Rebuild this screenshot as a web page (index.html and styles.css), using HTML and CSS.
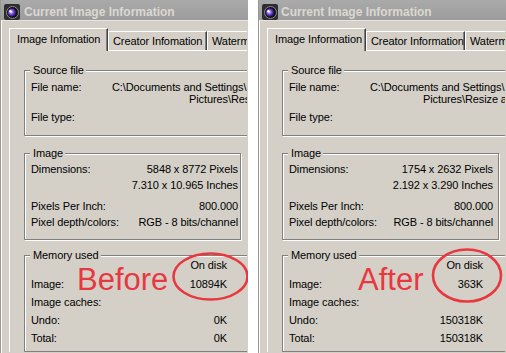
FILE: index.html
```html
<!DOCTYPE html>
<html lang="en">
<head>
<meta charset="utf-8">
<title>Current Image Information – Before / After</title>
<link rel="stylesheet" href="styles.css">
</head>
<body>
<div class="shot">
  <section class="win win-before">
    <header class="titlebar">
      <svg class="appicon" viewBox="0 0 16 16" width="16" height="16" aria-hidden="true">
        <defs>
          <radialGradient id="lensA" cx="0.42" cy="0.45" r="0.6">
            <stop offset="0" stop-color="#e6dcff"/>
            <stop offset="0.35" stop-color="#8f62f2"/>
            <stop offset="0.75" stop-color="#3b1d8e"/>
            <stop offset="1" stop-color="#15102a"/>
          </radialGradient>
        </defs>
        <rect x="0" y="0" width="16" height="16" rx="2" fill="#2d2d31"/>
        <circle cx="8.5" cy="8.5" r="6" fill="#121212" stroke="#8a8a8a" stroke-width="1"/>
        <circle cx="8" cy="8.5" r="4.3" fill="url(#lensA)"/>
        <circle cx="6.4" cy="7.2" r="1.2" fill="#ffffff"/>
      </svg>
      <span class="title">Current Image Information</span>
    </header>
    <div class="body">
      <div class="tabs">
        <div class="tab active">Image Infomation</div>
        <div class="tab">Creator Infomation</div>
        <div class="tab tab-last">Waterm</div>
      </div>
      <div class="page">
        <div class="group g-source">
          <div class="legend">Source file</div>
          <div class="r r-name">
            <span class="lbl">File name:</span>
            <span class="path">
              <span class="p1">C:\Documents and Settings\</span>
              <span class="p2 p2-before">Pictures\Resi</span>
            </span>
          </div>
          <div class="r r-type"><span class="lbl">File type:</span><span></span></div>
        </div>
        <div class="group g-image">
          <div class="legend">Image</div>
          <div class="r r-dim">
            <span class="lbl">Dimensions:</span>
            <span class="val"><span class="ln">5848 x 8772 Pixels</span><span class="ln">7.310 x 10.965 Inches</span></span>
          </div>
          <div class="r r-ppi"><span class="lbl">Pixels Per Inch:</span><span class="val">800.000</span></div>
          <div class="r"><span class="lbl">Pixel depth/colors:</span><span class="val">RGB - 8 bits/channel</span></div>
        </div>
        <div class="group g-mem">
          <div class="legend">Memory used</div>
          <div class="r"><span class="lbl"></span><span class="val">On disk</span></div>
          <div class="r r-img"><span class="lbl">Image:</span><span class="val">10894K</span></div>
          <div class="r"><span class="lbl">Image caches:</span><span class="val"></span></div>
          <div class="r"><span class="lbl">Undo:</span><span class="val">0K</span></div>
          <div class="r"><span class="lbl">Total:</span><span class="val">0K</span></div>
        </div>
      </div>
    </div>
    <svg class="annot" viewBox="0 0 247 353" width="247" height="353" aria-hidden="true">
      <ellipse cx="209.5" cy="276.5" rx="37" ry="23" fill="none" stroke="#e8383f" stroke-width="2.6"/>
    </svg>
    <span class="mark mark-before">Before</span>
  </section>

  <section class="win win-after">
    <header class="titlebar">
      <svg class="appicon" viewBox="0 0 16 16" width="16" height="16" aria-hidden="true">
        <defs>
          <radialGradient id="lensB" cx="0.42" cy="0.45" r="0.6">
            <stop offset="0" stop-color="#e6dcff"/>
            <stop offset="0.35" stop-color="#8f62f2"/>
            <stop offset="0.75" stop-color="#3b1d8e"/>
            <stop offset="1" stop-color="#15102a"/>
          </radialGradient>
        </defs>
        <rect x="0" y="0" width="16" height="16" rx="2" fill="#2d2d31"/>
        <circle cx="8.5" cy="8.5" r="6" fill="#121212" stroke="#8a8a8a" stroke-width="1"/>
        <circle cx="8" cy="8.5" r="4.3" fill="url(#lensB)"/>
        <circle cx="6.4" cy="7.2" r="1.2" fill="#ffffff"/>
      </svg>
      <span class="title">Current Image Information</span>
    </header>
    <div class="body">
      <div class="tabs">
        <div class="tab active">Image Information</div>
        <div class="tab">Creator Information</div>
        <div class="tab tab-last">Waterm</div>
      </div>
      <div class="page">
        <div class="group g-source">
          <div class="legend">Source file</div>
          <div class="r r-name">
            <span class="lbl">File name:</span>
            <span class="path">
              <span class="p1">C:\Documents and Settings\</span>
              <span class="p2 p2-after">Pictures\Resize a</span>
            </span>
          </div>
          <div class="r r-type"><span class="lbl">File type:</span><span></span></div>
        </div>
        <div class="group g-image">
          <div class="legend">Image</div>
          <div class="r r-dim">
            <span class="lbl">Dimensions:</span>
            <span class="val"><span class="ln">1754 x 2632 Pixels</span><span class="ln">2.192 x 3.290 Inches</span></span>
          </div>
          <div class="r r-ppi"><span class="lbl">Pixels Per Inch:</span><span class="val">800.000</span></div>
          <div class="r"><span class="lbl">Pixel depth/colors:</span><span class="val">RGB - 8 bits/channel</span></div>
        </div>
        <div class="group g-mem">
          <div class="legend">Memory used</div>
          <div class="r"><span class="lbl"></span><span class="val">On disk</span></div>
          <div class="r r-img"><span class="lbl">Image:</span><span class="val">363K</span></div>
          <div class="r"><span class="lbl">Image caches:</span><span class="val"></span></div>
          <div class="r"><span class="lbl">Undo:</span><span class="val">150318K</span></div>
          <div class="r"><span class="lbl">Total:</span><span class="val">150318K</span></div>
        </div>
      </div>
    </div>
    <svg class="annot" viewBox="0 0 247 353" width="247" height="353" aria-hidden="true">
      <ellipse cx="208" cy="275.5" rx="34" ry="26" fill="none" stroke="#e8383f" stroke-width="2.6"/>
    </svg>
    <span class="mark mark-after">After</span>
  </section>
</div>
</body>
</html>
```

FILE: styles.css
```css
* { box-sizing: border-box; }

html, body {
  margin: 0;
  padding: 0;
}

body {
  width: 506px;
  height: 353px;
  overflow: hidden;
  background: #ffffff;
  font-family: "Liberation Sans", Arial, sans-serif;
  font-size: 11px;
  letter-spacing: -0.1px;
  color: #000;
}

.shot {
  display: flex;
  gap: 10px;
  height: 353px;
}

.win {
  position: relative;
  flex: none;
  width: 248px;
  height: 353px;
  overflow: hidden;
  display: flex;
  flex-direction: column;
  background: #d4d0c8;
  border-left: 1px solid #9c988f;
}

.titlebar {
  flex: none;
  height: 20px;
  display: flex;
  align-items: flex-start;
  padding: 4px 0 0 3px;
  background: linear-gradient(#aaaaaa, #9c9c9c);
}

.appicon {
  display: block;
  flex: none;
}

.title {
  margin-left: 4px;
  font-weight: bold;
  font-size: 12px;
  line-height: 16px;
  letter-spacing: 0;
  color: #dbd8d1;
  white-space: nowrap;
}

.win-after .title { margin-left: 3px; }

.body {
  flex: 1;
  border-top: 1px solid #e6e4de;
  border-left: 1px solid #ffffff;
  padding: 7px 0 0 7px;
}

.tabs {
  position: relative;
  z-index: 1;
  display: flex;
  align-items: flex-end;
  height: 22px;
}

.tab {
  flex: none;
  width: 99px;
  height: 19px;
  padding: 2px 0 0 4px;
  line-height: 14px;
  white-space: nowrap;
  overflow: hidden;
  background: #d4d0c8;
  border-top: 1px solid #ffffff;
  border-left: 1px solid #ffffff;
  border-right: 1px solid #404040;
  box-shadow: inset -1px 0 0 #808080;
}

.tab.active {
  height: 23px;
  margin-bottom: -1px;
  padding: 3px 0 0 7px;
}

.tab.tab-last {
  width: 40px;
  border-right: 0;
  box-shadow: none;
}

.page {
  width: 238px;
  flex: 1;
  overflow: hidden;
  border-top: 1px solid #ffffff;
  border-left: 1px solid #ffffff;
  padding: 19px 0 0 14px;
}

.group {
  border: 1px solid #808080;
  box-shadow: inset 1px 1px 0 #ffffff, 1px 1px 0 #ffffff;
  padding: 0 2px 0 6px;
}

.legend {
  width: max-content;
  height: 13px;
  margin: -7px 0 -6px -1px;
  padding: 0 2px 0 3px;
  line-height: 13px;
  background: #d4d0c8;
}

.r {
  display: grid;
  white-space: nowrap;
}

.val {
  text-align: right;
}

.ln,
.p1,
.p2 {
  display: block;
}

.path {
  overflow: hidden;
}

/* Source file */
.g-source {
  width: 240px;
  border-right: 0;
  padding-bottom: 12px;
}

.g-source .r {
  grid-template-columns: 81px 136px;
  line-height: 12px;
}

.r-name { margin-top: 10px; }
.r-type { margin-top: 6px; }

.p2-before { padding-left: 77px; }
.p2-after { padding-left: 53px; }

/* Image */
.g-image {
  width: 217px;
  margin-top: 17px;
  padding-bottom: 9px;
}

.win-after .g-image { padding-right: 5px; }

.g-image .r {
  grid-template-columns: auto 1fr;
  line-height: 16px;
}

.r-dim { margin-top: 7px; }
.r-ppi { margin-top: 5px; }

/* Memory */
.g-mem {
  width: 240px;
  border-right: 0;
  margin-top: 15px;
  padding-bottom: 4px;
}

.g-mem .r {
  grid-template-columns: 110px 86px;
  line-height: 18px;
}

.win-after .g-mem .r { grid-template-columns: 110px 84px; }

.r-img { margin-top: 1px; }

/* Annotations drawn over the dialog */
.annot {
  position: absolute;
  left: 0;
  top: 0;
  pointer-events: none;
}

.mark {
  position: absolute;
  top: 264px;
  font-size: 31px;
  line-height: 31px;
  letter-spacing: 0;
  color: #e8383f;
  white-space: nowrap;
}

.mark-before { left: 76px; }
.mark-after { left: 99px; }
```
